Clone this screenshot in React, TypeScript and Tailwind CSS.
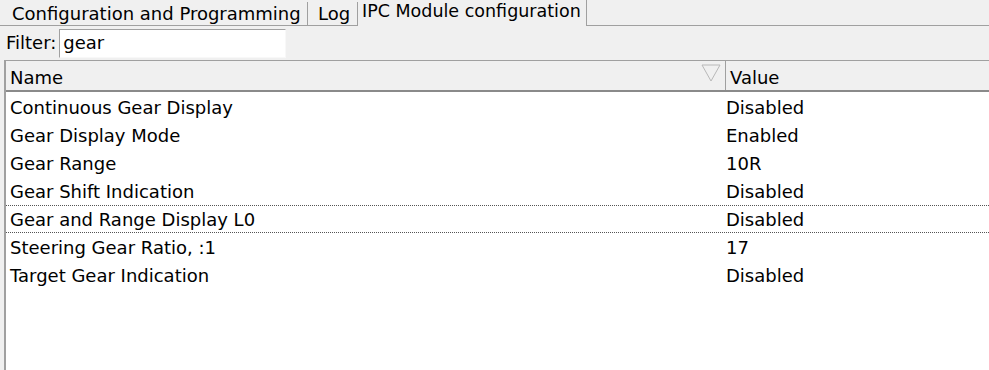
import React from 'react'

const rows: [string, string][] = [
  ['Continuous Gear Display', 'Disabled'],
  ['Gear Display Mode', 'Enabled'],
  ['Gear Range', '10R'],
  ['Gear Shift Indication', 'Disabled'],
  ['Gear and Range Display L0', 'Disabled'],
  ['Steering Gear Ratio, :1', '17'],
  ['Target Gear Indication', 'Disabled'],
]

const font = { fontFamily: '"DejaVu Sans", Tahoma, Verdana, sans-serif' }

export default function App() {
  return (
    <div className="w-[989px] h-[370px] overflow-hidden bg-[#f0f0f0] text-[18px] text-black flex flex-col whitespace-nowrap" style={font}>
      {/* Tabs */}
      <div className="flex h-[26px] items-end">
        <div className="h-[24px] w-[308px] border-r border-[#a0a0a0] border-b border-b-[#a0a0a0] flex items-center pl-[12px] leading-none">
          Configuration and Programming
        </div>
        <div className="h-[24px] w-[50px] border-r border-[#a0a0a0] border-b border-b-[#a0a0a0] flex items-center pl-[10px] leading-none">
          Log
        </div>
        <div className="h-[26px] w-[229px] border-r border-[#a0a0a0] flex items-center pl-[4px] leading-none pb-[2px] text-[17.5px]">
          IPC Module configuration
        </div>
        <div className="flex-1 h-[26px] border-b border-[#a0a0a0]" />
      </div>

      {/* Filter */}
      <div className="flex items-center h-[34px] pl-[6px] gap-[3px]">
        <span className="leading-none">Filter:</span>
        <div className="w-[227px] h-[29px] bg-white border-t border-l border-[#a0a0a0] border-r border-b border-r-[#f8f8f8] border-b-[#f8f8f8] flex items-center pl-[3px] leading-none">
          gear
        </div>
      </div>

      {/* Table */}
      <div className="flex-1 flex flex-col border-l-[2px] border-[#a0a0a0] ml-[4px]">
        <div className="flex h-[32px] border-t border-[#a0a0a0] border-b-2 border-b-[#8a8a8a] bg-[#f0f0f0]">
          <div className="w-[720px] flex items-center pl-[4px] pt-[3px] relative border-r border-[#a0a0a0]">
            Name
            <svg className="absolute right-[4px] top-[3px]" width="20" height="18" viewBox="0 0 20 18">
              <path d="M1 1 L19 1 L10 17 Z" fill="none" stroke="#b8b8b8" strokeWidth="1" />
            </svg>
          </div>
          <div className="flex-1 flex items-center pl-[4px] pt-[3px]">Value</div>
        </div>
        <div className="flex-1 bg-white flex flex-col pt-[1px]">
          {rows.map(([n, v], i) => (
            <div
              key={n}
              className={`flex h-[28px] items-center pt-[2px] ${i === 4 ? 'border-y border-dotted border-[#555]' : 'border-y border-transparent'}`}
            >
              <div className="w-[720px] pl-[4px] leading-none">{n}</div>
              <div className="flex-1 leading-none">{v}</div>
            </div>
          ))}
        </div>
      </div>
    </div>
  )
}
